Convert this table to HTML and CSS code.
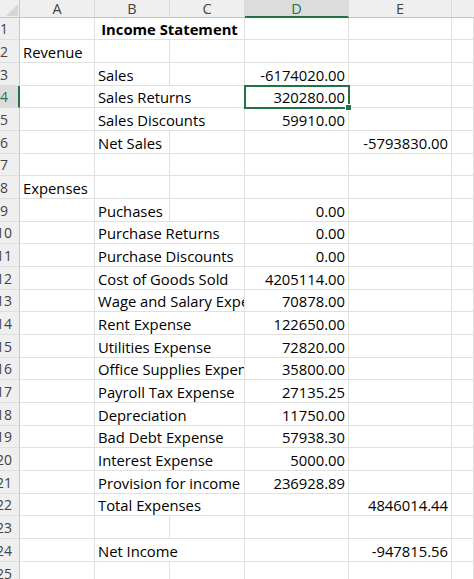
FILE: index.html
```html
<!DOCTYPE html>
<html>
<head>
<meta charset="utf-8">
<link rel="stylesheet" href="styles.css">
</head>
<body>
<div class="sheet">
  <div class="corner"><svg width="12" height="12" viewBox="0 0 12 12"><polygon points="12,0 12,12 0,12" fill="#d6d6d6"/></svg></div>
  <div class="ch">A</div><div class="ch">B</div><div class="ch">C</div><div class="ch on">D</div><div class="ch">E</div><div class="ch last"></div>

  <div class="rh"><span>1</span></div><div class="c"></div><div class="c s2 bold center">Income Statement</div><div class="c"></div><div class="c"></div><div class="c"></div>
  <div class="rh"><span>2</span></div><div class="c">Revenue</div><div class="c"></div><div class="c"></div><div class="c"></div><div class="c"></div><div class="c"></div>
  <div class="rh"><span>3</span></div><div class="c"></div><div class="c">Sales</div><div class="c"></div><div class="c num">-6174020.00</div><div class="c"></div><div class="c"></div>
  <div class="rh on"><span>4</span></div><div class="c"></div><div class="c s2">Sales Returns</div><div class="c num sel">320280.00</div><div class="c"></div><div class="c"></div>
  <div class="rh"><span>5</span></div><div class="c"></div><div class="c s2">Sales Discounts</div><div class="c num">59910.00</div><div class="c"></div><div class="c"></div>
  <div class="rh"><span>6</span></div><div class="c"></div><div class="c">Net Sales</div><div class="c"></div><div class="c"></div><div class="c num">-5793830.00</div><div class="c"></div>
  <div class="rh"><span>7</span></div><div class="c"></div><div class="c"></div><div class="c"></div><div class="c"></div><div class="c"></div><div class="c"></div>
  <div class="rh"><span>8</span></div><div class="c">Expenses</div><div class="c"></div><div class="c"></div><div class="c"></div><div class="c"></div><div class="c"></div>
  <div class="rh"><span>9</span></div><div class="c"></div><div class="c">Puchases</div><div class="c"></div><div class="c num">0.00</div><div class="c"></div><div class="c"></div>
  <div class="rh"><span>10</span></div><div class="c"></div><div class="c s2">Purchase Returns</div><div class="c num">0.00</div><div class="c"></div><div class="c"></div>
  <div class="rh"><span>11</span></div><div class="c"></div><div class="c s2">Purchase Discounts</div><div class="c num">0.00</div><div class="c"></div><div class="c"></div>
  <div class="rh"><span>12</span></div><div class="c"></div><div class="c s2">Cost of Goods Sold</div><div class="c num">4205114.00</div><div class="c"></div><div class="c"></div>
  <div class="rh"><span>13</span></div><div class="c"></div><div class="c s2">Wage and Salary Expense</div><div class="c num">70878.00</div><div class="c"></div><div class="c"></div>
  <div class="rh"><span>14</span></div><div class="c"></div><div class="c s2">Rent Expense</div><div class="c num">122650.00</div><div class="c"></div><div class="c"></div>
  <div class="rh"><span>15</span></div><div class="c"></div><div class="c s2">Utilities Expense</div><div class="c num">72820.00</div><div class="c"></div><div class="c"></div>
  <div class="rh"><span>16</span></div><div class="c"></div><div class="c s2">Office Supplies Expense</div><div class="c num">35800.00</div><div class="c"></div><div class="c"></div>
  <div class="rh"><span>17</span></div><div class="c"></div><div class="c s2">Payroll Tax Expense</div><div class="c num">27135.25</div><div class="c"></div><div class="c"></div>
  <div class="rh"><span>18</span></div><div class="c"></div><div class="c s2">Depreciation</div><div class="c num">11750.00</div><div class="c"></div><div class="c"></div>
  <div class="rh"><span>19</span></div><div class="c"></div><div class="c s2">Bad Debt Expense</div><div class="c num">57938.30</div><div class="c"></div><div class="c"></div>
  <div class="rh"><span>20</span></div><div class="c"></div><div class="c s2">Interest Expense</div><div class="c num">5000.00</div><div class="c"></div><div class="c"></div>
  <div class="rh"><span>21</span></div><div class="c"></div><div class="c s2">Provision for income taxes</div><div class="c num">236928.89</div><div class="c"></div><div class="c"></div>
  <div class="rh"><span>22</span></div><div class="c"></div><div class="c s2">Total Expenses</div><div class="c"></div><div class="c num">4846014.44</div><div class="c"></div>
  <div class="rh"><span>23</span></div><div class="c"></div><div class="c"></div><div class="c"></div><div class="c"></div><div class="c"></div><div class="c"></div>
  <div class="rh"><span>24</span></div><div class="c"></div><div class="c s2">Net Income</div><div class="c"></div><div class="c num">-947815.56</div><div class="c"></div>
  <div class="rh"><span>25</span></div><div class="c"></div><div class="c"></div><div class="c"></div><div class="c"></div><div class="c"></div><div class="c"></div>
</div>
</body>
</html>
```

FILE: styles.css
```css
html, body {
  margin: 0;
  padding: 0;
  background: #ffffff;
  overflow: hidden;
  height: 579px;
}

.sheet {
  display: grid;
  grid-template-columns: 20px 75px 75px 75px 104px 103px 1fr;
  grid-template-rows: 18px repeat(8, 22px 23px 23px) 23px;
  width: 474px;
  font-family: "Open Sans", "Noto Sans", sans-serif;
  font-size: 14.8px;
  color: #000;
}

.corner {
  background: #efefef;
  border-right: 1px solid #c8c8c8;
  border-bottom: 1px solid #c8c8c8;
  display: flex;
  align-items: flex-end;
  justify-content: flex-end;
  padding: 0 1px 1px 0;
}

.corner svg {
  display: block;
}

.ch {
  background: #efefef;
  border-right: 1px solid #dadada;
  border-bottom: 1px solid #c4c4c4;
  color: #444444;
  font-size: 14.5px;
  line-height: 17px;
  display: flex;
  align-items: center;
  justify-content: center;
}

.ch.on {
  background: #dcdcdc;
  color: #217346;
  border-bottom: 2px solid #217346;
}

.ch.last {
  border-right: none;
}

.rh {
  background: #efefef;
  border-right: 1px solid #c8c8c8;
  border-bottom: 1px solid #dedede;
  overflow: hidden;
  display: flex;
  align-items: flex-end;
  color: #444444;
  font-size: 14px;
  line-height: 20px;
}

.rh span {
  display: flex;
  justify-content: center;
  width: 8px;
  flex: 0 0 8px;
  white-space: nowrap;
}

.rh.on {
  background: #dcdcdc;
  color: #217346;
  border-right: 2px solid #217346;
}

.c {
  border-right: 1px solid #e0e0e0;
  border-bottom: 1px solid #e0e0e0;
  overflow: hidden;
  white-space: nowrap;
  padding: 0 3px;
  line-height: 20px;
  display: flex;
  align-items: flex-end;
  min-width: 0;
}

.s2 {
  grid-column: span 2;
}

.bold {
  font-weight: 700;
}

.center {
  justify-content: center;
}

.num {
  justify-content: flex-end;
  padding-right: 3px;
}

.sel {
  position: relative;
  overflow: visible;
}

.sel::after {
  content: "";
  position: absolute;
  top: -1px;
  left: -1px;
  right: -2px;
  bottom: -2px;
  border: 2px solid #217346;
}

.sel::before {
  content: "";
  position: absolute;
  right: -4px;
  bottom: -4px;
  width: 5px;
  height: 5px;
  background: #217346;
  border: 1px solid #ffffff;
  z-index: 1;
}
```
